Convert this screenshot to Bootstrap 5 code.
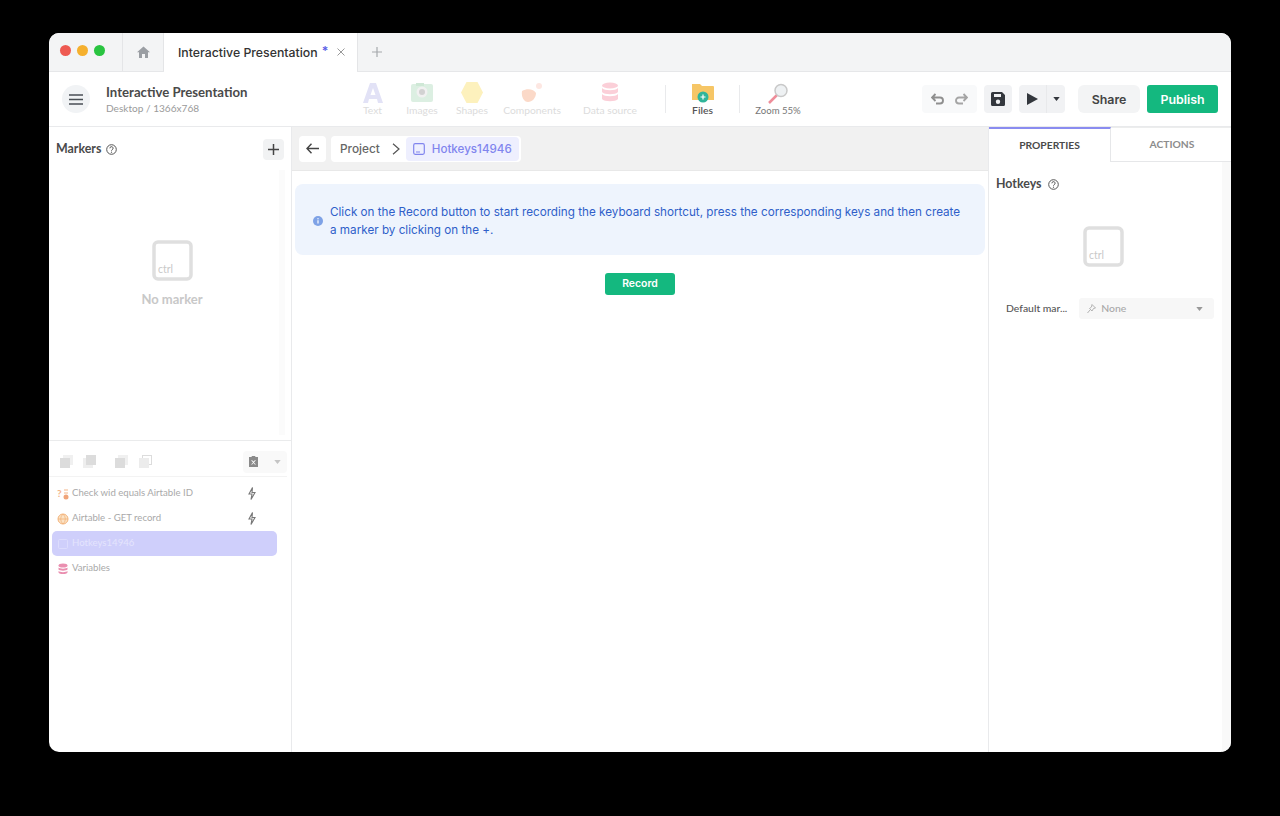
<!DOCTYPE html>
<html lang="en">
<head>
<meta charset="utf-8">
<title>Interactive Presentation</title>
<link href="https://cdn.jsdelivr.net/npm/bootstrap@5.3.0/dist/css/bootstrap.min.css" rel="stylesheet">
<style>
html,body{height:100%;}
body{background:#000;font-family:"Lato","Liberation Sans",sans-serif;color:#444;overflow:hidden;}
.app-win{position:relative;margin:33px 0 0 49px;width:1182px;height:719px;background:#fff;border-radius:10px;overflow:hidden;display:flex;flex-direction:column;}
.tabbar{height:39px;background:#f3f4f5;border-bottom:1px solid #e6e7e9;flex:none;}
.lights{width:73px;padding-left:11px;gap:6px;}
.lights i{width:11px;height:11px;border-radius:50%;display:block;}
.home-tab{width:42px;height:38px;border-left:1px solid #e4e5e7;border-right:1px solid #e4e5e7;}
.act-tab{width:193px;height:39px;background:#fff;padding-left:14px;font:500 12.3px "Inter",sans-serif;color:#333;white-space:nowrap;position:relative;z-index:1;}
.act-tab b{color:#5b5fe6;font-weight:600;margin-left:4px;margin-top:-3px;}
.act-tab svg{margin-left:auto;margin-right:11px;}
.new-tab{width:38px;height:38px;border-left:1px solid #e4e5e7;}
.toolbar{height:55px;flex:none;border-bottom:1px solid #e9eaec;}
.burger{width:28px;height:28px;border-radius:50%;background:#f1f3f5;margin-left:13px;}
.doc-box{margin-left:16px;width:244px;line-height:1;padding-top:1px;}
.doc-t{font-size:13.2px;font-weight:700;color:#4a4a4a;margin-bottom:4px;white-space:nowrap;}
.doc-s{font-size:10.1px;color:#9a9a9a;}
.tool{display:flex;flex-direction:column;align-items:center;font-size:10.3px;line-height:1;color:#dcdcdc;white-space:nowrap;}
.tool svg{display:block;margin-bottom:2px;}
.w47{width:47px;padding-right:2px;}.w50{width:50px}.w74{width:74px;padding-right:4px;}.w78{width:78px}
.sep{width:1px;height:28px;background:#e9eaec;}
.sep-a{margin-left:16px;}
.tool-files{width:73px;color:#555;}
.tool-zoom{width:76px;color:#777;font-size:9.6px;}
.tb-actions{margin-left:auto;padding-right:13px;}
.grp{height:28px;border-radius:4px;background:#f1f2f4;display:flex;align-items:center;justify-content:center;}
.g-undo{width:55px;gap:9px;background:#f8f9fa;}
.g-save{width:28px;margin-left:7px;}
.g-play{width:46px;margin-left:7px;}
.g-play span{display:flex;align-items:center;justify-content:center;height:100%;}
.g-play span:first-child{width:28px;border-right:1px solid #e8e9eb;}
.g-play span:last-child{width:18px;}
.btn-share{width:62px;height:28px;margin-left:13px;padding:0;background:#f3f4f5;border:0;font:600 12.4px "Inter",sans-serif;color:#444;}
.btn-pub{width:71px;height:28px;margin-left:7px;padding:0;background:#14b87f;border:0;border-radius:3px;font:600 12.4px "Inter",sans-serif;color:#fff;}
.btn-pub:hover{background:#14b87f;color:#fff;}
.workarea{flex:1;min-height:0;}
.pane-l{width:243px;border-right:1px solid #e9eaec;flex:none;}
.mark-head{height:43px;padding:1px 7px 0;font-size:12.4px;font-weight:700;color:#4a4a4a;}
.mark-head svg.hq{margin-left:5px;}
.add-btn{width:21px;height:21px;background:#f1f2f3;border-radius:4px;margin-left:auto;}
.mark-box{height:271px;position:relative;border-bottom:1px solid #eaebec;}
.sbar{position:absolute;left:230px;top:0;width:6px;height:265px;background:#fbfbfb;}
.empty-m{padding-top:70px;width:246px;}
.empty-m p{margin:8px 0 0;font-size:13px;font-weight:700;color:#c8c8c8;line-height:20px;}
.tool-row{height:36px;margin:0 4px 0 0;border-bottom:1px solid #f3f3f3;padding:6px 0 0 11px;}
.tool-row svg{flex:none;}
.mg-a{margin-right:10px;}
.mg-b{margin-left:19px;}
.mg-c{margin-left:11px;}
.tr-del{width:44px;height:22px;margin-left:auto;background:#f9f9f9;border-radius:4px;gap:16px;padding-right:1px;}
.layer-list{padding:4px 14px 0 3px;}
.layer{height:25px;border-radius:5px;padding-left:5px;font-size:9.6px;color:#a9a9a9;white-space:nowrap;}
.layer svg.ic{margin-right:3px;flex:none;}
.layer svg.zap{margin-left:auto;margin-right:21px;}
.layer-sel{background:#cfcffb;color:#e4e4fd;}
.pane-c{flex:1;min-width:0;}
.crumbbar{height:44px;background:#f1f1f1;border-bottom:1px solid #e8e8e8;padding:0 0 0 7px;}
.back-btn{width:27px;height:26px;background:#fff;border-radius:4px;}
.crumbs{height:26px;background:#fff;border-radius:4px;margin-left:5px;padding:0 2px 0 9px;width:190px;font:500 11.8px "Inter",sans-serif;color:#666;}
.crumbs svg.chev{margin:0 6px 0 12px;}
.chip{height:24px;background:#eeeffe;border-radius:4px;padding:0 7px;color:#8185ee;white-space:nowrap;flex:1;font-size:11.6px;}
.chip svg{margin-right:7px;}
.hint{margin:13px 3px 0;height:71px;background:#eef4fd;border-radius:8px;padding:2px 20px 0 18px;color:#2f5fc9;font:400 11.7px/18px "Inter",sans-serif;}
.hint svg{flex:none;margin-right:7px;}
.btn-rec{display:block;width:70px;height:22px;margin:18px auto 0;padding:0 0 1px;background:#14b87f;border:0;border-radius:3px;font:600 10.4px "Inter",sans-serif;color:#fff;}
.btn-rec:hover{background:#14b87f;color:#fff;}
.pane-r{width:243px;border-left:1px solid #e9eaec;flex:none;position:relative;}
.rtabs{height:35px;font-size:10.3px;font-weight:700;}
.rtab-on{width:122px;border-top:2px solid #8a8cf0;border-right:1px solid #e6e7e9;color:#4a4a4a;}
.rtab-off{flex:1;border-top:1px solid #eceded;border-bottom:1px solid #e6e7e9;color:#8c8c8c;padding-left:2px;}
.r-sbar{position:absolute;right:0;top:35px;bottom:0;width:9px;background:#f9f9f9;}
.r-title{padding:14px 0 0 7px;font-size:12.4px;font-weight:700;color:#4a4a4a;line-height:16px;}
.r-title svg{margin-left:6px;}
.r-key{margin:34px 0 0 94px;}
.r-field{margin-top:31px;padding-left:17px;font-size:10.4px;font-weight:500;color:#555;}
.r-sel{width:135px;height:21px;margin-left:12px;background:#f7f7f7;border-radius:3px;padding:0 11px 0 8px;color:#a8a8a8;font-size:10.4px;}
.r-sel svg.pin{margin-right:5px;}
.r-sel svg.car{margin-left:auto;}
</style>
</head>
<body>
<div class="app-win">
  <div class="tabbar d-flex align-items-center">
    <div class="lights d-flex align-items-center pb-1">
      <i style="background:#ee5a52"></i><i style="background:#f5b02e"></i><i style="background:#29c440"></i>
    </div>
    <div class="home-tab d-flex align-items-center justify-content-center">
      <svg width="13" height="12" viewBox="0 0 13 12"><path d="M6.500.500 0 6.300h2V12h3V8h3v4h3V6.300h2z" fill="#9a9ea3"/></svg>
    </div>
    <div class="act-tab d-flex align-items-center">Interactive Presentation <b>*</b>
      <svg width="10" height="10" viewBox="0 0 10 10"><path d="M1.500 1.500l7 7m0-7-7 7" stroke="#999" fill="none"/></svg>
    </div>
    <div class="new-tab d-flex align-items-center justify-content-center">
      <svg width="12" height="12" viewBox="0 0 12 12"><path d="M6 1v10M1 6h10" stroke="#a5a8ac" fill="none" stroke-width="1.200"/></svg>
    </div>
  </div>

  <div class="toolbar d-flex align-items-center">
    <div class="burger d-flex align-items-center justify-content-center">
      <svg width="14" height="11" viewBox="0 0 14 11"><path d="M0 1h14M0 5.500h14M0 10h14" stroke="#4a4f55" stroke-width="1.300" fill="none"/></svg>
    </div>
    <div class="doc-box">
      <div class="doc-t">Interactive Presentation</div>
      <div class="doc-s">Desktop / 1366x768</div>
    </div>
    <div class="tool w47">
      <svg width="20" height="21" viewBox="0 0 20 21"><path d="M7 1h6l7 20h-5l-1-4H6l-1 4H0zm3 5-2.500 7h5z" fill="#e2e2f6" fill-rule="evenodd"/></svg>Text
    </div>
    <div class="tool w50">
      <svg width="24" height="21" viewBox="0 0 24 21"><rect x="1" y="2" width="22" height="18" rx="2" fill="#dcefe2"/><rect x="6" y="1" width="8" height="3" fill="#cfe8d6"/><circle cx="12" cy="10" r="5.500" fill="#f1f1f1"/><circle cx="12" cy="10" r="3" fill="#d2d2d2"/></svg>Images
    </div>
    <div class="tool w50">
      <svg width="24" height="21" viewBox="0 0 24 21"><path d="M6.500 0h11L23 10.500 17.500 21h-11L1 10.500z" fill="#fdf1bd"/></svg>Shapes
    </div>
    <div class="tool w74">
      <svg width="24" height="21" viewBox="0 0 24 21"><path d="M2 9c5-3 12-2 14 2 0 5-4 9-8 9-4 0-7-5-6-11z" fill="#fbd9c8"/><circle cx="19" cy="4" r="3" fill="#fde7e2"/></svg>Components
    </div>
    <div class="tool w78">
      <svg width="16" height="21" viewBox="0 0 16 21"><ellipse cx="8" cy="3.500" rx="8" ry="3" fill="#fbcfd8"/><path d="M0 6c2 3 14 3 16 0v4c-2 3-14 3-16 0zM0 12c2 3 14 3 16 0v5c-2 3-14 3-16 0z" fill="#fbcfd8"/></svg>Data source
    </div>
    <div class="sep sep-a"></div>
    <div class="tool tool-files">
      <svg width="24" height="21" viewBox="0 0 24 21"><path d="M1 2h8l2 2h11a1 1 0 0 1 1 1v13H1z" fill="#f6c666"/><circle cx="12" cy="15" r="5.500" fill="#2fb59a"/><path d="M12 12.500v5M9.500 15h5" stroke="#fff" stroke-width="1.200"/></svg><span class="fw-semibold">Files</span>
    </div>
    <div class="sep"></div>
    <div class="tool tool-zoom">
      <svg width="24" height="21" viewBox="0 0 24 21"><path d="M3 20l8-8" stroke="#ee8d9a" stroke-width="2.500"/><circle cx="15" cy="7.500" r="6" fill="#eef1f3" stroke="#c9c9c9" stroke-width="1.500"/></svg>Zoom 55%
    </div>
    <div class="tb-actions d-flex align-items-center">
      <div class="grp g-undo">
        <svg width="14" height="12" viewBox="0 0 14 12"><path d="M4.500 1 1 4.500 4.500 8M1 4.500h8a3 3 0 0 1 0 6H5" stroke="#8f8f8f" stroke-width="1.900" fill="none"/></svg>
        <svg width="14" height="12" viewBox="0 0 14 12"><path d="M9.500 1 13 4.500 9.500 8M13 4.500H5a3 3 0 0 0 0 6h4" stroke="#a5a5a5" stroke-width="1.900" fill="none"/></svg>
      </div>
      <div class="grp g-save">
        <svg width="14" height="14" viewBox="0 0 14 14"><path fill-rule="evenodd" d="M1.500 0H11l3 3v9.500a1.500 1.500 0 0 1-1.500 1.500h-11A1.500 1.500 0 0 1 0 12.500v-11A1.500 1.500 0 0 1 1.500 0zM3 2v3h7V2zm4 5.500a2.200 2.200 0 1 0 0 4.400 2.200 2.200 0 0 0 0-4.400z" fill="#33373d"/></svg>
      </div>
      <div class="grp g-play">
        <span><svg width="11" height="12" viewBox="0 0 11 12"><path d="M0 0l11 6-11 6z" fill="#33373d"/></svg></span>
        <span><svg width="7" height="4" viewBox="0 0 8 5"><path d="M0 0h8L4 5z" fill="#33373d"/></svg></span>
      </div>
      <button type="button" class="btn btn-share">Share</button>
      <button type="button" class="btn btn-pub">Publish</button>
    </div>
  </div>

  <div class="workarea d-flex">
    <div class="pane-l">
      <div class="mark-head d-flex align-items-center">Markers
        <svg class="hq" width="11" height="11" viewBox="0 0 11 11"><circle cx="5.500" cy="5.500" r="4.800" stroke="#555" fill="none"/><path d="M3.900 4.300a1.600 1.600 0 1 1 2.300 1.400c-.5.300-.7.500-.7 1" stroke="#555" fill="none"/><circle cx="5.500" cy="8.200" r=".6" fill="#555"/></svg>
        <div class="add-btn d-flex align-items-center justify-content-center">
          <svg width="11" height="11" viewBox="0 0 11 11"><path d="M5.500 0v11M0 5.500h11" stroke="#444" stroke-width="1.500"/></svg>
        </div>
      </div>
      <div class="mark-box">
        <div class="sbar"></div>
        <div class="empty-m d-flex flex-column align-items-center">
          <svg width="41" height="41" viewBox="0 0 41 41"><rect x="2" y="2" width="37" height="37" rx="4" fill="#fff" stroke="#dfdfdf" stroke-width="3.500"/><text x="6" y="33" font-family="Lato,sans-serif" font-size="10.500" fill="#c9c9c9">ctrl</text></svg>
          <p>No marker</p>
        </div>
      </div>
      <div class="tool-row d-flex align-items-center">
        <svg width="13" height="13" viewBox="0 0 13 13" class="mg-a"><rect x="3" y="0" width="10" height="10" fill="#f0f0f0"/><rect x="0" y="3" width="10" height="10" fill="#dcdcdc"/></svg>
        <svg width="13" height="13" viewBox="0 0 13 13"><rect x="0" y="3" width="10" height="10" fill="#eeeeee"/><rect x="3" y="0" width="10" height="10" fill="#dcdcdc"/></svg>
        <svg width="13" height="13" viewBox="0 0 13 13" class="mg-b"><rect x="3" y="0" width="10" height="10" fill="#f0f0f0"/><rect x="0" y="3" width="10" height="10" fill="#dcdcdc"/></svg>
        <svg width="13" height="13" viewBox="0 0 13 13" class="mg-c"><rect x="3.500" y=".5" width="9" height="9" fill="#fff" stroke="#dcdcdc"/><rect x="0" y="3" width="10" height="10" fill="#ececec"/></svg>
        <div class="tr-del d-flex align-items-center justify-content-center">
          <svg width="9" height="11" viewBox="0 0 10 12"><path fill-rule="evenodd" d="M3 0h4v1h3v11H0V1h3zM2.500 5l2 2-2 2 .7.700 1.800-2 1.800 2 .7-.7-2-2 2-2-.7-.7L5 6 3.200 4.300z" fill="#8a8a8a"/></svg>
          <svg width="7" height="4" viewBox="0 0 8 5"><path d="M0 0h8L4 5z" fill="#c5c5c5"/></svg>
        </div>
      </div>
      <div class="layer-list">
        <div class="layer d-flex align-items-center">
          <svg class="ic" width="12" height="12" viewBox="0 0 12 12"><text x="0" y="9" font-family="Lato,sans-serif" font-size="10" font-weight="700" fill="#f3b488">?</text><path d="M7 2h4M7 5h4" stroke="#f3b488"/><circle cx="9" cy="9" r="2.500" fill="#f0a47a"/></svg>Check wid equals Airtable ID
          <svg class="zap" width="8" height="13" viewBox="0 0 8 13"><path d="M4.500.500 1 7h3l-1 5.500L7 5.500H4z" fill="none" stroke="#777" stroke-width="1.100"/></svg>
        </div>
        <div class="layer d-flex align-items-center">
          <svg class="ic" width="12" height="12" viewBox="0 0 12 12"><circle cx="6" cy="6" r="5" fill="#fbe3c6" stroke="#f2b27a"/><path d="M1 6h10M6 1c-3 3-3 7 0 10M6 1c3 3 3 7 0 10" stroke="#f2b27a" fill="none" stroke-width=".8"/></svg>Airtable - GET record
          <svg class="zap" width="8" height="13" viewBox="0 0 8 13"><path d="M4.500.500 1 7h3l-1 5.500L7 5.500H4z" fill="none" stroke="#777" stroke-width="1.100"/></svg>
        </div>
        <div class="layer layer-sel d-flex align-items-center">
          <svg class="ic" width="12" height="12" viewBox="0 0 12 12"><rect x="1.500" y="1.500" width="9" height="9" rx="1" fill="none" stroke="#dcdcfd"/></svg>Hotkeys14946
        </div>
        <div class="layer d-flex align-items-center">
          <svg class="ic" width="12" height="12" viewBox="0 0 12 12"><ellipse cx="6" cy="2.500" rx="4.500" ry="2" fill="#ea8fb0"/><path d="M1.500 4.500c1 1.500 8 1.500 9 0v2c-1 1.500-8 1.500-9 0zM1.500 8c1 1.500 8 1.500 9 0v1.500c-1 2-8 2-9 0z" fill="#ea8fb0"/></svg>Variables
        </div>
      </div>
    </div>

    <div class="pane-c">
      <div class="crumbbar d-flex align-items-center">
        <div class="back-btn d-flex align-items-center justify-content-center">
          <svg width="13" height="11" viewBox="0 0 13 11"><path d="M5.500.800 1 5.500l4.500 4.700M1 5.500h12" stroke="#444" stroke-width="1.400" fill="none"/></svg>
        </div>
        <div class="crumbs d-flex align-items-center">Project
          <svg class="chev" width="8" height="12" viewBox="0 0 8 12"><path d="M1 .800 7 6 1 11.200" stroke="#555" stroke-width="1.200" fill="none"/></svg>
          <div class="chip d-flex align-items-center">
            <svg width="12" height="12" viewBox="0 0 12 12"><rect x=".7" y=".7" width="10.600" height="10.600" rx="1.500" fill="none" stroke="#8185ee" stroke-width="1.200"/><path d="M3 9h4" stroke="#8185ee"/></svg>Hotkeys14946
          </div>
        </div>
      </div>
      <div class="hint d-flex align-items-center">
        <svg width="10" height="10" viewBox="0 0 10 10"><circle cx="5" cy="5" r="5" fill="#7ea2e6"/><path d="M5 4.300v3.200" stroke="#fff" stroke-width="1.200"/><circle cx="5" cy="2.700" r=".7" fill="#fff"/></svg>
        <span>Click on the Record button to start recording the keyboard shortcut, press the corresponding keys and then create a marker by clicking on the +.</span>
      </div>
      <button type="button" class="btn btn-rec">Record</button>
    </div>

    <div class="pane-r">
      <div class="rtabs d-flex">
        <div class="rtab-on d-flex align-items-center justify-content-center">PROPERTIES</div>
        <div class="rtab-off d-flex align-items-center justify-content-center">ACTIONS</div>
      </div>
      <div class="r-sbar"></div>
      <div class="r-title d-flex align-items-center">Hotkeys
        <svg width="11" height="11" viewBox="0 0 11 11"><circle cx="5.500" cy="5.500" r="4.800" stroke="#555" fill="none"/><path d="M3.900 4.300a1.600 1.600 0 1 1 2.300 1.400c-.5.300-.7.500-.7 1" stroke="#555" fill="none"/><circle cx="5.500" cy="8.200" r=".6" fill="#555"/></svg>
      </div>
      <div class="r-key">
        <svg class="d-block" width="41" height="41" viewBox="0 0 41 41"><rect x="2" y="2" width="37" height="37" rx="4" fill="#fff" stroke="#dfdfdf" stroke-width="3.500"/><text x="6" y="33" font-family="Lato,sans-serif" font-size="10.500" fill="#c9c9c9">ctrl</text></svg>
      </div>
      <div class="r-field d-flex align-items-center">Default mar...
        <div class="r-sel d-flex align-items-center">
          <svg class="pin" width="9" height="10" viewBox="0 0 9 10"><path d="M5 .500 8.500 4 6.500 4.500 5 7 2.500 4.500 4.500 3zM3 6 .5 9" stroke="#aaa" fill="none" stroke-width=".9"/></svg>None
          <svg class="car" width="7" height="4" viewBox="0 0 8 5"><path d="M0 0h8L4 5z" fill="#999"/></svg>
        </div>
      </div>
    </div>
  </div>
</div>
<script src="https://cdn.jsdelivr.net/npm/bootstrap@5.3.0/dist/js/bootstrap.bundle.min.js"></script>
</body>
</html>
